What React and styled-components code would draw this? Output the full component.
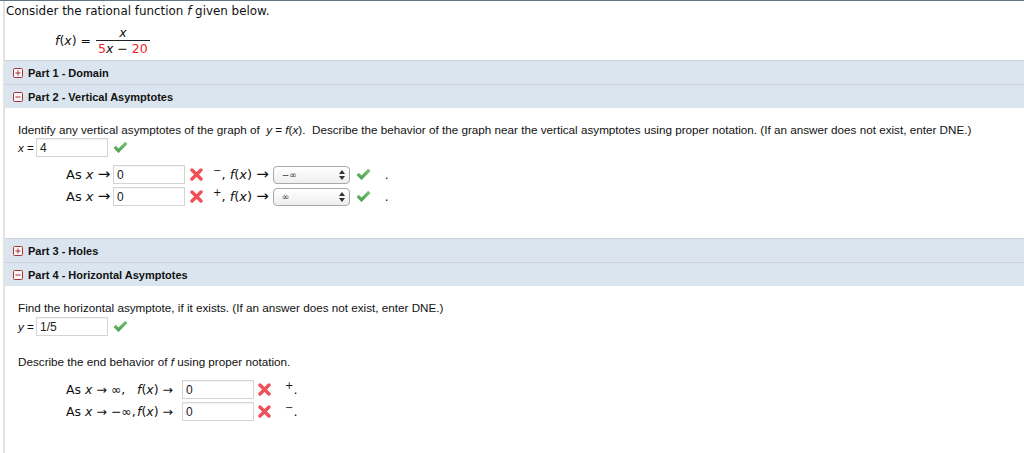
import React from "react";
import styled, { createGlobalStyle } from "styled-components";

const GlobalStyle = createGlobalStyle`
  body {
    margin: 0;
    background: #fff;
  }
`;

const Page = styled.div`
  border-top: 1px solid #627686;
  height: 452px;
  overflow: hidden;
`;

const Sheet = styled.div`
  margin-left: 3px;
  border-left: 2px solid #e3e3e3;
  height: 100%;
`;

const Intro = styled.div`
  font-family: "DejaVu Sans", sans-serif;
  font-size: 11.9px;
  line-height: 16px;
  color: #111;
  padding: 2px 0 0 1px;
  height: 18px;
  box-sizing: border-box;
`;

const Formula = styled.div`
  display: flex;
  align-items: center;
  gap: 5px;
  height: 41px;
  padding: 2px 0 0 50px;
  box-sizing: border-box;
  font-family: "DejaVu Sans", sans-serif;
  font-size: 12.5px;
  color: #111;
`;

const Fraction = styled.span`
  display: inline-flex;
  flex-direction: column;
  align-items: center;
  line-height: 13px;
`;

const Numer = styled.span`
  padding: 0 3px 1px;
`;

const Denom = styled.span`
  border-top: 1px solid #222;
  padding: 1px 2px 0;
`;

const Red = styled.span`
  color: #f0242c;
`;

const I = styled.i`
  font-style: italic;
`;

const PartHeader = styled.div`
  display: flex;
  align-items: center;
  gap: 5px;
  height: 24px;
  box-sizing: border-box;
  border-top: 1px solid #cdd1d5;
  background: #dae5ef;
  padding-left: 8px;
  font: bold 11px "Liberation Sans", Arial, sans-serif;
  color: #111;
`;

const PartBody = styled.div`
  height: ${(p) => p.$height}px;
  box-sizing: border-box;
  padding: 14px 0 0 13px;
  font: 11.7px "Liberation Sans", Arial, sans-serif;
  color: #111;
`;

const Line = styled.div`
  line-height: 16px;
  margin-top: ${(p) => p.$top || 0}px;
`;

const Row = styled.div`
  display: flex;
  align-items: center;
  height: 19px;
  margin-top: ${(p) => p.$top || 0}px;
  padding-left: ${(p) => p.$indent || 0}px;
`;

const Label = styled.span`
  display: inline-block;
  width: ${(p) => p.$width}px;
  white-space: nowrap;
`;

const MathText = styled.span`
  font-family: "DejaVu Sans", sans-serif;
  font-size: ${(p) => p.$size || 13}px;
  white-space: nowrap;
  width: ${(p) => (p.$width ? `${p.$width}px` : "auto")};
  margin-left: ${(p) => p.$gap || 0}px;
  display: inline-block;
`;

const Arrow = styled.span`
  font-size: ${(p) => (p.$long ? "15px" : "1em")};
  line-height: 0;
`;

const Sup = styled.sup`
  font-size: 10px;
  line-height: 0;
  vertical-align: 5px;
`;

const Input = styled.div`
  width: 72px;
  height: 19px;
  box-sizing: border-box;
  border: 1px solid #d4d4d4;
  box-shadow: inset 0 1px 1px rgba(0, 0, 0, 0.05);
  padding-left: 3px;
  display: flex;
  align-items: center;
  font: 12px "Liberation Sans", Arial, sans-serif;
  color: #222;
`;

const Select = styled.div`
  width: 77px;
  height: 18px;
  box-sizing: border-box;
  border: 1px solid #a9a9a9;
  border-radius: 4px;
  background: linear-gradient(#ffffff, #eeeeee);
  display: flex;
  align-items: center;
  padding: 0 4px 0 8px;
  font: 9px "DejaVu Sans", sans-serif;
  color: #333;
  margin-left: 4px;
`;

const Arrows = styled.svg`
  margin-left: auto;
`;

const Mark = styled.svg`
  margin-left: ${(p) => p.$gap || 0}px;
  flex: none;
`;

const Dot = styled.span`
  margin-left: ${(p) => p.$gap || 0}px;
  font-family: "DejaVu Sans", sans-serif;
  font-size: 12px;
`;

function ToggleIcon({ open }) {
  return (
    <svg width="10" height="10" viewBox="0 0 10 10">
      <rect x="0.5" y="0.5" width="9" height="9" rx="1" fill="#fbf3f3" stroke="#a3373a" />
      <rect x="2.5" y="4.5" width="5" height="1" fill="#a3373a" />
      {!open && <rect x="4.5" y="2.5" width="1" height="5" fill="#a3373a" />}
    </svg>
  );
}

function Check({ gap }) {
  return (
    <Mark $gap={gap} width="15" height="13" viewBox="0 0 15 13">
      <defs>
        <linearGradient id="chk" x1="0" y1="0" x2="0" y2="1">
          <stop offset="0" stopColor="#7cc47a" />
          <stop offset="1" stopColor="#479c47" />
        </linearGradient>
      </defs>
      <polygon points="0.5,7 2.8,4.8 5.5,7.4 12.2,0.8 14.5,3 5.5,12" fill="url(#chk)" />
    </Mark>
  );
}

function Cross({ gap }) {
  return (
    <Mark $gap={gap} width="13" height="13" viewBox="0 0 13 13">
      <path d="M2 2 L11 11 M11 2 L2 11" stroke="#f04f57" strokeWidth="3.4" strokeLinecap="round" />
    </Mark>
  );
}

function Dropdown({ value }) {
  return (
    <Select>
      {value}
      <Arrows width="6" height="10" viewBox="0 0 6 10">
        <polygon points="3,0 6,4 0,4" fill="#333" />
        <polygon points="0,6 6,6 3,10" fill="#333" />
      </Arrows>
    </Select>
  );
}

export default function App() {
  return (
    <>
      <GlobalStyle />
      <Page>
        <Sheet>
          <Intro>
            Consider the rational function <I>f</I> given below.
          </Intro>
          <Formula>
            <span>
              <I>f</I>(<I>x</I>) =
            </span>
            <Fraction>
              <Numer>
                <I>x</I>
              </Numer>
              <Denom>
                <Red>5</Red>
                <I>x</I> − <Red>20</Red>
              </Denom>
            </Fraction>
          </Formula>

          <PartHeader>
            <ToggleIcon />
            Part 1 - Domain
          </PartHeader>
          <PartHeader>
            <ToggleIcon open />
            Part 2 - Vertical Asymptotes
          </PartHeader>
          <PartBody $height={130}>
            <Line>
              Identify any vertical asymptotes of the graph of&nbsp; <I>y</I> = <I>f</I>(<I>x</I>).&nbsp; Describe the
              behavior of the graph near the vertical asymptotes using proper notation. (If an answer does not exist,
              enter DNE.)
            </Line>
            <Row>
              <Label $width={18}>
                <I>x</I> =
              </Label>
              <Input>4</Input>
              <Check gap={5} />
            </Row>
            <Row $top={8} $indent={48}>
              <MathText $width={47}>
                As <I>x</I> <Arrow $long>→</Arrow>
              </MathText>
              <Input>0</Input>
              <Cross gap={5} />
              <MathText $gap={10}>
                <Sup>−</Sup>, <I>f</I>(<I>x</I>) <Arrow $long>→</Arrow>
              </MathText>
              <Dropdown value="−∞" />
              <Check gap={6} />
              <Dot $gap={14}>.</Dot>
            </Row>
            <Row $top={3} $indent={48}>
              <MathText $width={47}>
                As <I>x</I> <Arrow $long>→</Arrow>
              </MathText>
              <Input>0</Input>
              <Cross gap={5} />
              <MathText $gap={10}>
                <Sup>+</Sup>, <I>f</I>(<I>x</I>) <Arrow $long>→</Arrow>
              </MathText>
              <Dropdown value="∞" />
              <Check gap={6} />
              <Dot $gap={14}>.</Dot>
            </Row>
          </PartBody>

          <PartHeader>
            <ToggleIcon />
            Part 3 - Holes
          </PartHeader>
          <PartHeader>
            <ToggleIcon open />
            Part 4 - Horizontal Asymptotes
          </PartHeader>
          <PartBody $height={166}>
            <Line>Find the horizontal asymptote, if it exists. (If an answer does not exist, enter DNE.)</Line>
            <Row $top={1}>
              <Label $width={18}>
                <I>y</I> =
              </Label>
              <Input>1/5</Input>
              <Check gap={5} />
            </Row>
            <Line $top={18}>
              Describe the end behavior of <I>f</I> using proper notation.
            </Line>
            <Row $top={10} $indent={48}>
              <MathText $size={12.5} $width={71}>
                As <I>x</I> <Arrow>→</Arrow> ∞,
              </MathText>
              <MathText $size={12.5} $width={45}>
                <I>f</I>(<I>x</I>) <Arrow>→</Arrow>
              </MathText>
              <Input>0</Input>
              <Cross gap={4} />
              <MathText $gap={14}>
                <Sup>+</Sup>.
              </MathText>
            </Row>
            <Row $top={3} $indent={48}>
              <MathText $size={12.5} $width={71}>
                As <I>x</I> <Arrow>→</Arrow> −∞,
              </MathText>
              <MathText $size={12.5} $width={45}>
                <I>f</I>(<I>x</I>) <Arrow>→</Arrow>
              </MathText>
              <Input>0</Input>
              <Cross gap={4} />
              <MathText $gap={14}>
                <Sup>−</Sup>.
              </MathText>
            </Row>
          </PartBody>
        </Sheet>
      </Page>
    </>
  );
}
